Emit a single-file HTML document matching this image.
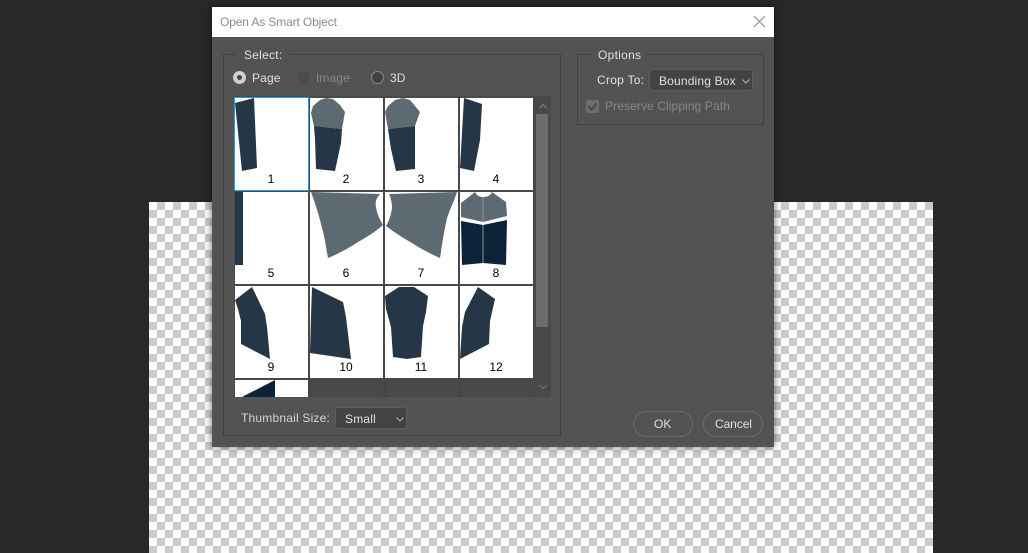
<!DOCTYPE html>
<html>
<head>
<meta charset="utf-8">
<style>
html,body{margin:0;padding:0;width:1028px;height:553px;overflow:hidden;background:#282828;}
body{position:relative;font-family:"Liberation Sans",sans-serif;font-size:12px;}
.a{position:absolute;}
.t{position:absolute;white-space:nowrap;line-height:14px;letter-spacing:.2px;color:#e0e0e0;}
#canvas{left:149px;top:202px;width:784px;height:351px;background:repeating-conic-gradient(#cbcbcb 0 25%,#fff 0 50%) 0 0/16px 16px;}
#dlg{left:212px;top:7px;width:562px;height:440px;background:#535353;box-shadow:0 0 8px rgba(0,0,0,.55);}
#title{left:212px;top:7px;width:562px;height:30px;background:#fff;}
.box{position:absolute;border:1px solid #414141;box-sizing:border-box;}
.leg{position:absolute;background:#535353;height:14px;}
.dd{position:absolute;box-sizing:border-box;background:#434343;border:1px solid #5d5d5d;border-radius:3px;}
.btn{position:absolute;box-sizing:border-box;width:60px;height:26px;border:1px solid #6c6c6c;border-radius:13px;}
</style>
</head>
<body>
<div class="a" id="canvas"></div>
<div class="a" id="dlg"></div>
<div class="a" id="title"></div>
<div class="t" style="left:220px;top:15px;color:#8b8b8b;letter-spacing:-.13px;">Open As Smart Object</div>

<div class="box" style="left:223px;top:54px;width:338px;height:382px;"></div>
<div class="leg" style="left:236px;top:48px;width:54px;"></div>
<div class="t" style="left:244px;top:48px;letter-spacing:.25px;">Select:</div>

<div class="box" style="left:577px;top:54px;width:187px;height:71px;"></div>
<div class="leg" style="left:592px;top:48px;width:54px;"></div>
<div class="t" style="left:598px;top:48px;letter-spacing:.28px;">Options</div>

<div class="t" style="left:252px;top:71px;letter-spacing:.15px;">Page</div>
<div class="t" style="left:316px;top:71px;color:#868686;letter-spacing:.1px;">Image</div>
<div class="t" style="left:390px;top:71px;letter-spacing:.1px;">3D</div>
<div class="t" style="left:597px;top:73px;letter-spacing:.28px;">Crop To:</div>
<div class="t" style="left:605px;top:99px;color:#878787;letter-spacing:.1px;">Preserve Clipping Path</div>
<div class="t" style="left:241px;top:411px;color:#d4d4d4;letter-spacing:.2px;">Thumbnail Size:</div>

<div class="dd" style="left:649px;top:69px;width:104px;height:22px;"></div>
<div class="t" style="left:659px;top:74px;letter-spacing:.17px;">Bounding Box</div>
<div class="dd" style="left:335px;top:407px;width:72px;height:22px;"></div>
<div class="t" style="left:345px;top:412px;letter-spacing:.2px;">Small</div>

<div class="btn" style="left:633px;top:411px;"></div>
<div class="t" style="left:654px;top:417px;letter-spacing:0;">OK</div>
<div class="btn" style="left:703px;top:411px;"></div>
<div class="t" style="left:715px;top:417px;letter-spacing:-.08px;">Cancel</div>

<svg class="a" style="left:0;top:0;" width="1028" height="553" viewBox="0 0 1028 553">
<!-- close X -->
<path d="M754 16L765 27M765 16L754 27" stroke="#8a8a8a" stroke-width="1" fill="none"/>
<!-- radios -->
<circle cx="239.500" cy="77.500" r="6.500" fill="#cfcfcf"/>
<circle cx="239.500" cy="77.500" r="2.500" fill="#444"/>
<circle cx="303.500" cy="77.500" r="5.500" fill="#4b4b4b" stroke="#4a4a4a"/>
<circle cx="377.500" cy="77.500" r="6" fill="#434343" stroke="#8a8a8a"/>
<!-- dropdown chevrons -->
<path d="M742.500 79.500L746 83L749.500 79.500" stroke="#b5b5b5" fill="none"/>
<path d="M396.500 417.500L400 421L403.500 417.500" stroke="#b5b5b5" fill="none"/>
<!-- checkbox -->
<rect x="586" y="100" width="13" height="13" rx="2" fill="#6d6d6d"/>
<path d="M588.500 106.500L591.500 109.500L596.500 103.500" stroke="#4a4a4a" stroke-width="2" fill="none"/>
<!-- thumbnail area -->
<rect x="234" y="96" width="317" height="301" fill="#494949"/>
<rect x="534" y="97" width="1" height="300" fill="#444"/>
<path d="M309.500 380V397M384.500 380V397M459.500 380V397" stroke="#444" stroke-width="2"/>
<rect x="536" y="114" width="12" height="213" fill="#6c6c6c"/>
<path d="M539.500 108L543 104.500L546.500 108" stroke="#787878" stroke-width="1.500" fill="none"/>
<path d="M539.500 385L543 388.500L546.500 385" stroke="#6e6e6e" stroke-width="1.200" fill="none"/>
<!-- cells -->
<g fill="#fff">
<rect x="235" y="98" width="73" height="92"/><rect x="310" y="98" width="73" height="92"/><rect x="385" y="98" width="73" height="92"/><rect x="460" y="98" width="73" height="92"/>
<rect x="235" y="192" width="73" height="92"/><rect x="310" y="192" width="73" height="92"/><rect x="385" y="192" width="73" height="92"/><rect x="460" y="192" width="73" height="92"/>
<rect x="235" y="286" width="73" height="92"/><rect x="310" y="286" width="73" height="92"/><rect x="385" y="286" width="73" height="92"/><rect x="460" y="286" width="73" height="92"/>
<rect x="235" y="380" width="73" height="17"/>
</g>
<rect x="234.500" y="97.500" width="74" height="93" fill="none" stroke="#1ba3e4"/>
<!-- garments -->
<g fill="#5e6a72">
<polygon points="311,113 313,106 320,100 326,98 333,99 340,105 345,112 342,129 314,126"/>
<polygon points="385,112 388,106 395,100 403,98 410,100 420,112 415,126 388,129"/>
<path d="M311 192L380 194C376 199 375 202 376 207C377 214 380 220 383 225C375 232 367 237 358 242C349 248 338 254 328 258C326 248 325 238 322 228C319 215 315 203 311 192Z"/>
<path d="M389 194L457 192C454 201 450 209 447 218C444 231 442 245 440 258C431 254 421 249 412 243C403 238 394 232 386 226C389 221 391 215 392 208C392 203 391 198 389 194Z"/>
<path d="M461 203L475 192C477 196 480 197 483 197C487 197 490 196 492 192L506 202L507 216L483 222L461 217Z"/>
</g>
<g fill="#253647">
<polygon points="235,103 254,98 257,168 242,171"/>
<polygon points="314,126 342,129 341,143 335,171 316,169 315,139"/>
<polygon points="388,129 415,126 415,143 415,169 396,171 391,149"/>
<polygon points="464,98 482,104 480,140 474,171 460,168 462,133"/>
<rect x="235" y="192" width="8" height="73"/>
<polygon points="235,300 252,287 265,314 267,327 270,359 241,344 241,321 238,309"/>
<polygon points="312,287 343,302 346,317 351,359 310,353 311,317"/>
<polygon points="385,296 399,287 414,287 428,296 426,312 423,326 421,357 407,359 393,357 391,327 386,309"/>
<polygon points="478,287 495,299 490,321 489,344 460,359 462,327 465,312"/>
</g>
<g fill="#0c2238">
<polygon points="461,221 483,225 507,220 506,265 483,263 462,265"/>
<polygon points="242,397 275,380 275,397"/>
</g>
<path d="M483 197V222M483 225V263" stroke="#8a949b" stroke-width="1"/>
<!-- numbers -->
<g font-family="'Liberation Sans',sans-serif" font-size="12" fill="#000" text-anchor="middle">
<text x="271" y="183">1</text><text x="346" y="183">2</text><text x="421" y="183">3</text><text x="496" y="183">4</text>
<text x="271" y="277">5</text><text x="346" y="277">6</text><text x="421" y="277">7</text><text x="496" y="277">8</text>
<text x="271" y="371">9</text><text x="346" y="371">10</text><text x="421" y="371">11</text><text x="496" y="371">12</text>
</g>
</svg>
</body>
</html>
